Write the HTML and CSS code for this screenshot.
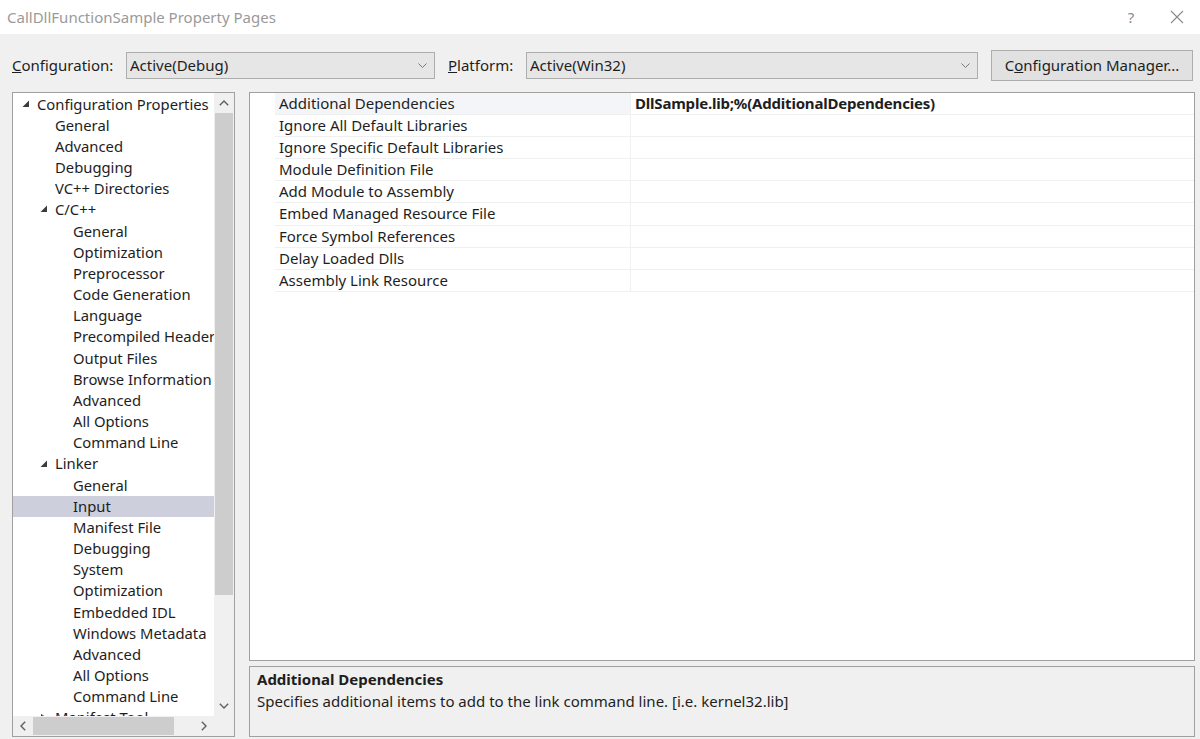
FILE: index.html
```html
<!DOCTYPE html>
<html>
<head>
<meta charset="utf-8">
<title>CallDllFunctionSample Property Pages</title>
<link rel="stylesheet" href="styles.css">
</head>
<body>
<div class="titlebar">
  <span class="title">CallDllFunctionSample Property Pages</span>
  <div class="title-btns">
    <span class="help">?</span>
    <span class="close"><svg width="14" height="14" viewBox="0 0 14 14"><path d="M1 1 L13 13 M13 1 L1 13" stroke="#8a8a8a" stroke-width="1.1" fill="none"/></svg></span>
  </div>
</div>

<div class="toolbar">
  <span class="lbl lbl-config"><u>C</u>onfiguration:</span>
  <div class="combo combo-config">
    <span class="combo-text">Active(Debug)</span>
    <svg class="chev" width="9" height="5" viewBox="0 0 9 5"><path d="M0.5 0.5 L4.5 4.5 L8.5 0.5" stroke="#7a7a7a" stroke-width="1" fill="none"/></svg>
  </div>
  <span class="lbl lbl-platform"><u>P</u>latform:</span>
  <div class="combo combo-platform">
    <span class="combo-text">Active(Win32)</span>
    <svg class="chev" width="9" height="5" viewBox="0 0 9 5"><path d="M0.5 0.5 L4.5 4.5 L8.5 0.5" stroke="#7a7a7a" stroke-width="1" fill="none"/></svg>
  </div>
  <button class="btn">C<u>o</u>nfiguration Manager...</button>
</div>

<div class="main">
  <div class="tree">
    <div class="tree-content">
      <div class="row l0"><svg class="tri" width="8" height="8" viewBox="0 0 8 8"><path d="M7 0.5 L7 7 L0.5 7 Z" fill="#3c3c3c"/></svg>Configuration Properties</div>
      <div class="row l1">General</div>
      <div class="row l1">Advanced</div>
      <div class="row l1">Debugging</div>
      <div class="row l1">VC++ Directories</div>
      <div class="row l1"><svg class="tri" width="8" height="8" viewBox="0 0 8 8"><path d="M7 0.5 L7 7 L0.5 7 Z" fill="#3c3c3c"/></svg>C/C++</div>
      <div class="row l2">General</div>
      <div class="row l2">Optimization</div>
      <div class="row l2">Preprocessor</div>
      <div class="row l2">Code Generation</div>
      <div class="row l2">Language</div>
      <div class="row l2">Precompiled Headers</div>
      <div class="row l2">Output Files</div>
      <div class="row l2">Browse Information</div>
      <div class="row l2">Advanced</div>
      <div class="row l2">All Options</div>
      <div class="row l2">Command Line</div>
      <div class="row l1"><svg class="tri" width="8" height="8" viewBox="0 0 8 8"><path d="M7 0.5 L7 7 L0.5 7 Z" fill="#3c3c3c"/></svg>Linker</div>
      <div class="row l2">General</div>
      <div class="row l2 selected">Input</div>
      <div class="row l2">Manifest File</div>
      <div class="row l2">Debugging</div>
      <div class="row l2">System</div>
      <div class="row l2">Optimization</div>
      <div class="row l2">Embedded IDL</div>
      <div class="row l2">Windows Metadata</div>
      <div class="row l2">Advanced</div>
      <div class="row l2">All Options</div>
      <div class="row l2">Command Line</div>
      <div class="row l1"><svg class="tri tri-right" width="8" height="8" viewBox="0 0 8 8"><path d="M1.5 0.5 L6 4 L1.5 7.5 Z" fill="none" stroke="#3c3c3c" stroke-width="1"/></svg>Manifest Tool</div>
    </div>
    <div class="vscroll">
      <div class="sb-btn"><svg width="10" height="6" viewBox="0 0 10 6"><path d="M0.8 5.2 L5 1 L9.2 5.2" stroke="#606060" stroke-width="1.4" fill="none"/></svg></div>
      <div class="vtrack"><div class="vthumb"></div></div>
      <div class="sb-btn"><svg width="10" height="6" viewBox="0 0 10 6"><path d="M0.8 0.8 L5 5 L9.2 0.8" stroke="#606060" stroke-width="1.4" fill="none"/></svg></div>
    </div>
    <div class="hscroll">
      <div class="sb-btn"><svg width="6" height="10" viewBox="0 0 6 10"><path d="M5.2 0.8 L1 5 L5.2 9.2" stroke="#606060" stroke-width="1.4" fill="none"/></svg></div>
      <div class="htrack"><div class="hthumb"></div></div>
      <div class="sb-btn"><svg width="6" height="10" viewBox="0 0 6 10"><path d="M0.8 0.8 L5 5 L0.8 9.2" stroke="#606060" stroke-width="1.4" fill="none"/></svg></div>
    </div>
    <div class="corner"></div>
  </div>

  <div class="right">
    <div class="grid">
      <div class="prow selected"><div class="gutter"></div><div class="pname">Additional Dependencies</div><div class="pval bold">DllSample.lib;%(AdditionalDependencies)</div></div>
      <div class="prow"><div class="gutter"></div><div class="pname">Ignore All Default Libraries</div><div class="pval"></div></div>
      <div class="prow"><div class="gutter"></div><div class="pname">Ignore Specific Default Libraries</div><div class="pval"></div></div>
      <div class="prow"><div class="gutter"></div><div class="pname">Module Definition File</div><div class="pval"></div></div>
      <div class="prow"><div class="gutter"></div><div class="pname">Add Module to Assembly</div><div class="pval"></div></div>
      <div class="prow"><div class="gutter"></div><div class="pname">Embed Managed Resource File</div><div class="pval"></div></div>
      <div class="prow"><div class="gutter"></div><div class="pname">Force Symbol References</div><div class="pval"></div></div>
      <div class="prow"><div class="gutter"></div><div class="pname">Delay Loaded Dlls</div><div class="pval"></div></div>
      <div class="prow"><div class="gutter"></div><div class="pname">Assembly Link Resource</div><div class="pval"></div></div>
    </div>
    <div class="desc">
      <div class="desc-title">Additional Dependencies</div>
      <div class="desc-text">Specifies additional items to add to the link command line. [i.e. kernel32.lib]</div>
    </div>
  </div>
</div>
</body>
</html>
```

FILE: styles.css
```css
* { box-sizing: border-box; }
html, body { margin: 0; padding: 0; }
body {
  width: 1200px;
  height: 739px;
  overflow: hidden;
  background: #f0f0f0;
  font-family: "Noto Sans", "Open Sans", sans-serif;
  font-size: 15px;
  color: #1e1e1e;
}

/* title bar */
.titlebar {
  height: 34px;
  background: #ffffff;
  display: flex;
  align-items: center;
  justify-content: space-between;
  padding-left: 7px;
}
.title { color: #9a9a9a; font-size: 15px; }
.title-btns { display: flex; height: 100%; align-items: center; }
.help {
  width: 46px;
  text-align: center;
  color: #8a8a8a;
  font-size: 15px;
}
.close {
  width: 46px;
  height: 100%;
  display: flex;
  align-items: center;
  justify-content: center;
}

/* toolbar */
.toolbar {
  display: flex;
  align-items: center;
  height: 32px;
  margin-top: 15px;
  margin-bottom: 11px;
  padding-left: 12px;
}
.lbl { white-space: nowrap; }
.lbl-config { width: 114px; }
.lbl-platform { width: 78px; margin-left: 13px; }
.combo {
  height: 27px;
  border: 1px solid #adadad;
  background: #e6e6e6;
  display: flex;
  align-items: center;
  justify-content: space-between;
  padding: 0 7px 0 3px;
}
.combo-config { width: 309px; }
.combo-platform { width: 452px; }
.chev { margin-top: 1px; }
.btn {
  margin-left: 13px;
  width: 202px;
  height: 31px;
  border: 1px solid #adadad;
  background: #e1e1e1;
  font-family: inherit;
  font-size: 15px;
  color: #1e1e1e;
  padding: 0;
}

/* main */
.main {
  display: flex;
  height: 645px;
  padding-left: 12px;
}
.tree {
  width: 223px;
  height: 645px;
  border: 1px solid #a0a0a0;
  display: grid;
  grid-template-columns: 201px 20px;
  grid-template-rows: 623px 20px;
  background: #f0f0f0;
  font-size: 14.8px;
}
.tree-content {
  background: #ffffff;
  overflow: hidden;
  padding-top: 0.5px;
  white-space: nowrap;
}
.row {
  height: 21.18px;
  line-height: 21.18px;
  display: flex;
  align-items: center;
}
.row.l0 { padding-left: 9px; }
.row.l1 { padding-left: 27px; }
.row.l2 { padding-left: 60px; }
.row.l1 .tri, .row.l0 .tri { margin-right: 7px; margin-top: -1px; }
.row.l1:not(:has(.tri)) { padding-left: 42px; }
.tri { flex: none; }
.row.selected { background: #cdd0dc; }

.vscroll {
  display: flex;
  flex-direction: column;
  background: #f0f0f0;
}
.sb-btn {
  flex: none;
  width: 20px;
  height: 20px;
  display: flex;
  align-items: center;
  justify-content: center;
}
.vtrack { flex: 1; padding: 0 1px; }
.vthumb {
  height: 482px;
  background: #cdcdcd;
}
.hscroll {
  display: flex;
  background: #f0f0f0;
}
.htrack { flex: 1; padding: 1px 0; }
.hthumb {
  width: 141px;
  height: 100%;
  background: #cdcdcd;
}
.corner { background: #f0f0f0; }

/* right side */
.right {
  margin-left: 14px;
  width: 946px;
  display: flex;
  flex-direction: column;
  gap: 5px;
}
.grid {
  height: 569px;
  border: 1px solid #a0a0a0;
  background: #ffffff;
}
.prow {
  display: flex;
  height: 22.1px;
  line-height: 21px;
}
.gutter { width: 25px; flex: none; }
.pname {
  width: 356px;
  flex: none;
  padding-left: 4px;
  border-bottom: 1px solid #f0f0f0;
  border-right: 1px solid #f0f0f0;
  white-space: nowrap;
}
.pval {
  flex: 1;
  padding-left: 4px;
  border-bottom: 1px solid #f0f0f0;
  white-space: nowrap;
}
.prow.selected .pname { background: #f3f5f8; }
.bold { font-weight: bold; letter-spacing: -0.2px; }

.desc {
  height: 71px;
  border: 1px solid #a0a0a0;
  background: #f0f0f0;
  padding: 1px 7px;
  line-height: 22px;
}
.desc-title { font-weight: bold; }
```
